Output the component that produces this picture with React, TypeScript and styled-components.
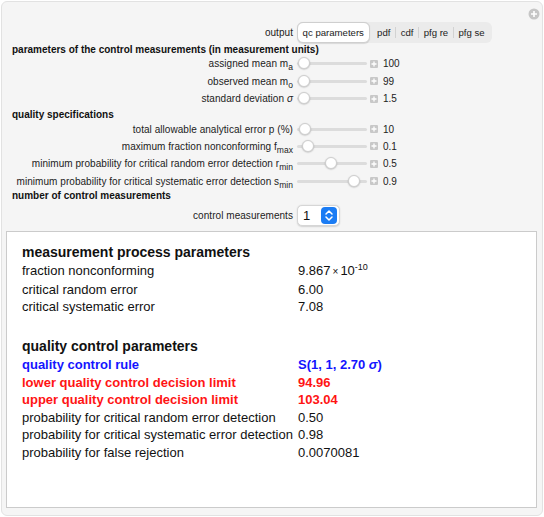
import styled, { createGlobalStyle } from "styled-components"

const GlobalStyle = createGlobalStyle`
  html, body { margin: 0; padding: 0; background: #ffffff; }
  body { font-family: "Liberation Sans", Arial, sans-serif; color: #1e1e1e; }
`

const sliders1 = [
  { label: "assigned mean m", sub: "a", pos: 0.01, value: "100" },
  { label: "observed mean m", sub: "o", pos: 0.01, value: "99" },
  { label: "standard deviation ", sigma: true, pos: 0.01, value: "1.5" },
]

const sliders2 = [
  { label: "total allowable analytical error p (%)", pos: 0.04, value: "10" },
  { label: "maximum fraction nonconforming f", sub: "max", pos: 0.08, value: "0.1" },
  { label: "minimum probability for critical random error detection r", sub: "min", pos: 0.48, value: "0.5" },
  { label: "minimum probability for critical systematic error detection s", sub: "min", pos: 0.86, value: "0.9" },
]

type SliderDef = { label: string; sub?: string; sigma?: boolean; pos: number; value: string }

const SliderRow = ({ d, h }: { d: SliderDef; h: number }) => (
  <Row $h={h}>
    <Label>
      {d.label}
      {d.sub && <Sub>{d.sub}</Sub>}
      {d.sigma && <i>σ</i>}
    </Label>
    <Controls>
      <Track>
        <Thumb style={{ left: `${d.pos * 59}px` }} />
      </Track>
      <PlusBox>
        <svg width="8" height="8" viewBox="0 0 8 8">
          <path d="M4 1.5v5M1.5 4h5" stroke="#fff" strokeWidth="1.3" />
        </svg>
      </PlusBox>
      <Value>{d.value}</Value>
    </Controls>
  </Row>
)

const App = () => {
  return (
    <>
      <GlobalStyle />
      <Panel>
        <CornerButton>
          <svg width="12" height="12" viewBox="0 0 12 12">
            <circle cx="6" cy="6" r="5.5" fill="#c6c6c6" />
            <path d="M6 3v6M3 6h6" stroke="#fff" strokeWidth="1.6" />
          </svg>
        </CornerButton>

        <ControlArea>
          <Row $h={21}>
            <Label>output</Label>
            <Controls>
              <Setter>
                <SetterItem $active>qc parameters</SetterItem>
                <SetterItem>pdf</SetterItem>
                <Sep />
                <SetterItem>cdf</SetterItem>
                <Sep />
                <SetterItem>pfg re</SetterItem>
                <Sep />
                <SetterItem>pfg se</SetterItem>
              </Setter>
            </Controls>
          </Row>

          <Heading $h={12}>parameters of the control measurements (in measurement units)</Heading>
          {sliders1.map((d) => (
            <SliderRow key={d.label} d={d} h={17.5} />
          ))}

          <Heading $h={13}>quality specifications</Heading>
          {sliders2.map((d) => (
            <SliderRow key={d.label} d={d} h={17.3} />
          ))}

          <Heading $h={11}>number of control measurements</Heading>
          <Row $h={29}>
            <Label>control measurements</Label>
            <Controls>
              <Popup>
                <span>1</span>
                <PopupButton>
                  <svg width="10" height="13" viewBox="0 0 10 13">
                    <path d="M2 5l3-3 3 3M2 8l3 3 3-3" stroke="#fff" strokeWidth="1.5" fill="none" strokeLinecap="round" strokeLinejoin="round" />
                  </svg>
                </PopupButton>
              </Popup>
            </Controls>
          </Row>
        </ControlArea>

        <Output>
          <OutHeading>measurement process parameters</OutHeading>
          <Table>
            <Cell>fraction nonconforming</Cell>
            <Cell>
              9.867<Times>×</Times>10<Sup>-10</Sup>
            </Cell>
            <Cell>critical random error</Cell>
            <Cell>6.00</Cell>
            <Cell>critical systematic error</Cell>
            <Cell>7.08</Cell>
          </Table>

          <OutHeading $gap>quality control parameters</OutHeading>
          <Table>
            <Cell $tone="blue">quality control rule</Cell>
            <Cell $tone="blue">
              S(1, 1, 2.70 <i>σ</i>)
            </Cell>
            <Cell $tone="red">lower quality control decision limit</Cell>
            <Cell $tone="red">94.96</Cell>
            <Cell $tone="red">upper quality control decision limit</Cell>
            <Cell $tone="red">103.04</Cell>
            <Cell>probability for critical random error detection</Cell>
            <Cell>0.50</Cell>
            <Cell>probability for critical systematic error detection</Cell>
            <Cell>0.98</Cell>
            <Cell>probability for false rejection</Cell>
            <Cell>0.0070081</Cell>
          </Table>
        </Output>
      </Panel>
    </>
  )
}

export default App

const Panel = styled.div`
  position: relative;
  box-sizing: border-box;
  width: 542px;
  height: 515px;
  margin: 1px;
  padding-top: 20px;
  background: #f5f5f5;
  border: 1px solid #e2e2e2;
  border-radius: 6px;
`
const CornerButton = styled.div`
  position: absolute;
  top: 6px;
  right: 2px;
  width: 12px;
  height: 12px;
  display: flex;
`
const ControlArea = styled.div`
  display: flex;
  flex-direction: column;
  padding: 0 10px;
`
const Row = styled.div<{ $h: number }>`
  display: flex;
  align-items: center;
  height: ${(p) => p.$h}px;
  font-size: 10px;
`
const Heading = styled.div<{ $h: number }>`
  display: flex;
  align-items: center;
  height: ${(p) => p.$h}px;
  font-size: 10px;
  font-weight: bold;
  color: #111;
  white-space: nowrap;
`
const Label = styled.div`
  width: 281px;
  flex: none;
  text-align: right;
  white-space: nowrap;
  color: #222;
  letter-spacing: 0.05px;
`
const Sub = styled.sub`
  font-size: 8.5px;
  vertical-align: -2.5px;
  line-height: 0;
`
const Controls = styled.div`
  display: flex;
  align-items: center;
  margin-left: 4px;
`
const Track = styled.div`
  position: relative;
  width: 70px;
  height: 3px;
  border-radius: 2px;
  background: #dcdcdc;
`
const Thumb = styled.div`
  position: absolute;
  top: -5px;
  box-sizing: border-box;
  width: 12px;
  height: 12px;
  border-radius: 50%;
  background: #fff;
  border: 0.5px solid #cfcfcf;
  box-shadow: 0 0.5px 1.5px rgba(0, 0, 0, 0.25);
`
const PlusBox = styled.div`
  width: 8px;
  height: 8px;
  margin-left: 3px;
  border-radius: 1px;
  background: #c8c8c8;
  display: flex;
`
const Value = styled.span`
  margin-left: 5px;
  color: #222;
`
const Setter = styled.div`
  display: flex;
  align-items: center;
  height: 21px;
  padding-right: 3px;
  background: #ebebeb;
  border-radius: 6px;
`
const SetterItem = styled.div<{ $active?: boolean }>`
  box-sizing: border-box;
  display: flex;
  align-items: center;
  height: 100%;
  padding: 0 4.6px;
  font-size: 9.6px;
  color: #222;
  background: ${(p) => (p.$active ? "#fff" : "transparent")};
  border: ${(p) => (p.$active ? "0.5px solid #cfcfcf" : "none")};
  border-radius: 6px;
  box-shadow: ${(p) => (p.$active ? "0 0.5px 1px rgba(0,0,0,0.12)" : "none")};
  margin-right: ${(p) => (p.$active ? 3 : 0)}px;
`
const Sep = styled.div`
  width: 1px;
  height: 11px;
  background: #d2d2d2;
`
const Popup = styled.div`
  box-sizing: border-box;
  display: flex;
  align-items: center;
  justify-content: space-between;
  width: 43px;
  height: 21px;
  padding: 0 2px 0 5px;
  background: #fff;
  border: 0.5px solid #d6d6d6;
  border-radius: 5px;
  box-shadow: 0 0.5px 1.5px rgba(0, 0, 0, 0.15);
  font-size: 13px;
  color: #111;
`
const PopupButton = styled.div`
  width: 16px;
  height: 17px;
  border-radius: 4px;
  background: #1b7cf4;
  display: flex;
  align-items: center;
  justify-content: center;
`
const Output = styled.div`
  box-sizing: border-box;
  margin: 1px 5px 0 4px;
  height: 277px;
  padding: 11px 0 0 15px;
  background: #fff;
  border: 1px solid #cbcbcb;
  font-family: "Liberation Sans", Arial, sans-serif;
  color: #111;
`
const OutHeading = styled.div<{ $gap?: boolean }>`
  font-size: 14px;
  font-weight: bold;
  line-height: 18px;
  margin-top: ${(p) => (p.$gap ? 21 : 0)}px;
  margin-bottom: 1.5px;
`
const Table = styled.div`
  display: grid;
  grid-template-columns: 276px 1fr;
`
const Cell = styled.div<{ $tone?: "blue" | "red" }>`
  font-size: 13px;
  line-height: 17.5px;
  white-space: nowrap;
  font-weight: ${(p) => (p.$tone ? "bold" : "normal")};
  color: ${(p) => (p.$tone === "blue" ? "#1414ff" : p.$tone === "red" ? "#ff1414" : "#111")};
`
const Times = styled.span`
  font-size: 10px;
  margin: 0 2px;
`
const Sup = styled.sup`
  font-size: 9px;
  vertical-align: 5px;
  line-height: 0;
`
